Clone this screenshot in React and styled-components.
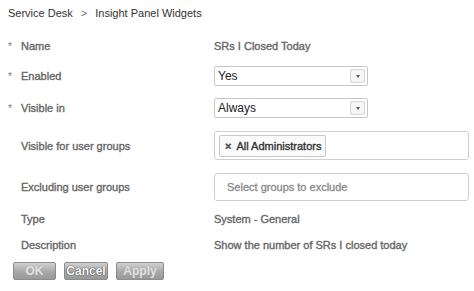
import React from 'react';
import styled, { createGlobalStyle } from 'styled-components';

const GlobalStyle = createGlobalStyle`
  body {
    margin: 0;
    background: #fff;
    font-family: "Liberation Sans", Arial, sans-serif;
  }
`;

const Page = styled.div`
  width: 474px;
  height: 291px;
  padding-left: 8px;
  box-sizing: border-box;
  font-size: 11px;
`;

const Crumbs = styled.div`
  display: flex;
  align-items: center;
  gap: 8px;
  height: 32px;
  padding-bottom: 6px;
  box-sizing: border-box;
  font-size: 11px;
  color: #333;
`;

const Sep = styled.span`
  color: #777;
`;

const Row = styled.div`
  display: flex;
  align-items: center;
  height: ${(p) => p.$h}px;
`;

const Star = styled.span`
  width: 13px;
  color: #777;
  font-size: 10px;
  visibility: ${(p) => (p.$on ? 'visible' : 'hidden')};
`;

const Label = styled.span`
  width: 193px;
  color: #666;
  -webkit-text-stroke: 0.35px #666;
`;

const Value = styled.span`
  color: #666;
  -webkit-text-stroke: 0.35px #666;
`;

const Select = styled.div`
  display: flex;
  align-items: center;
  justify-content: space-between;
  width: 154px;
  height: 20px;
  box-sizing: border-box;
  border: 1px solid #c6c6c6;
  border-radius: 2px;
  padding: 0 2px 0 3px;
  font-size: 12px;
  color: #222;
`;

const Arrow = styled.span`
  display: flex;
  align-items: center;
  justify-content: center;
  width: 15px;
  height: 14px;
  box-sizing: border-box;
  border: 1px solid #d4d4d4;
  border-radius: 2px;
  background: #f6f6f6;
  &::after {
    content: '';
    border-left: 2.5px solid transparent;
    border-right: 2.5px solid transparent;
    border-top: 3px solid #555;
  }
`;

const Multi = styled.div`
  display: flex;
  align-items: center;
  width: 255px;
  height: ${(p) => p.$h}px;
  box-sizing: border-box;
  border: 1px solid #cfcfcf;
  border-radius: 3px;
  padding: 0 4px;
`;

const Tag = styled.span`
  display: flex;
  align-items: center;
  gap: 5px;
  height: 22px;
  box-sizing: border-box;
  padding: 0 4px 0 5px;
  border: 1px solid #c8c8c8;
  border-radius: 2px;
  background: #fafafa;
  font-size: 11px;
  color: #333;
  -webkit-text-stroke: 0.35px #333;
`;

const Remove = styled.span`
  font-size: 11px;
  font-weight: bold;
  color: #555;
`;

const Placeholder = styled.span`
  padding-left: 8px;
  color: #888;
  -webkit-text-stroke: 0.3px #888;
`;

const Buttons = styled.div`
  display: flex;
  gap: 8px;
  padding: 3px 0 0 5px;
`;

const Button = styled.button`
  height: 18px;
  padding: 0;
  width: ${(p) => p.$w}px;
  border: 1px solid #8c8c8c;
  border-radius: 2px;
  background: linear-gradient(#d0d0d0, #a8a8a8 55%, #999);
  color: ${(p) => (p.$disabled ? '#e2e2e2' : '#fff')};
  text-shadow: ${(p) => (p.$disabled ? '0 0 1px #999' : '0 0 1px #333, 0 0 1px #333')};
  font-family: "Liberation Sans", Arial, sans-serif;
  font-size: 12px;
  font-weight: bold;
`;

export default function App() {
  return (
    <Page>
      <GlobalStyle />
      <Crumbs>
        <span>Service Desk</span>
        <Sep>&gt;</Sep>
        <span>Insight Panel Widgets</span>
      </Crumbs>
      <Row $h={28}>
        <Star $on>*</Star>
        <Label>Name</Label>
        <Value>SRs I Closed Today</Value>
      </Row>
      <Row $h={32}>
        <Star $on>*</Star>
        <Label>Enabled</Label>
        <Select>
          Yes
          <Arrow />
        </Select>
      </Row>
      <Row $h={32}>
        <Star $on>*</Star>
        <Label>Visible in</Label>
        <Select>
          Always
          <Arrow />
        </Select>
      </Row>
      <Row $h={43}>
        <Star />
        <Label>Visible for user groups</Label>
        <Multi $h={29}>
          <Tag>
            <Remove>×</Remove>
            All Administrators
          </Tag>
        </Multi>
      </Row>
      <Row $h={40}>
        <Star />
        <Label>Excluding user groups</Label>
        <Multi $h={28}>
          <Placeholder>Select groups to exclude</Placeholder>
        </Multi>
      </Row>
      <Row $h={24}>
        <Star />
        <Label>Type</Label>
        <Value>System - General</Value>
      </Row>
      <Row $h={28}>
        <Star />
        <Label>Description</Label>
        <Value>Show the number of SRs I closed today</Value>
      </Row>
      <Buttons>
        <Button $w={43} $disabled>OK</Button>
        <Button $w={44}>Cancel</Button>
        <Button $w={48} $disabled>Apply</Button>
      </Buttons>
    </Page>
  );
}
